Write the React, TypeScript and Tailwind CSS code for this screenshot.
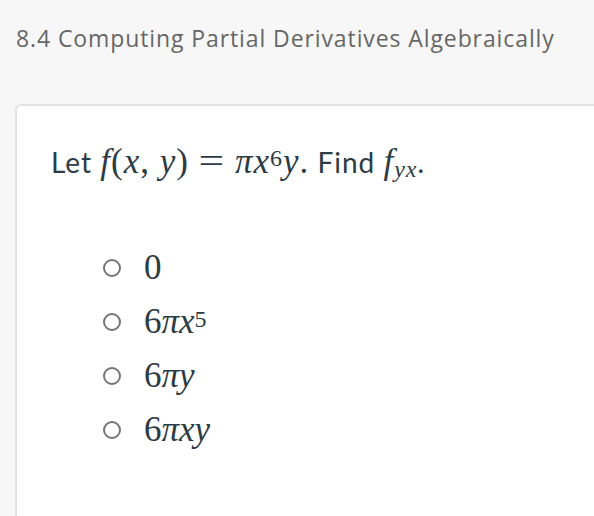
const serif = "font-['Liberation_Serif','Times_New_Roman',serif]"

function Radio() {
  return <div className="h-[18px] w-[18px] shrink-0 rounded-full border-2 border-[#757575] bg-white" />
}

const options = [
  <span className={serif}>0</span>,
  <span className={serif}>
    6<i>πx</i>
    <sup className="relative -top-[6px] text-[24px]">5</sup>
  </span>,
  <span className={serif}>
    6<i>πy</i>
  </span>,
  <span className={serif}>
    6<i>πxy</i>
  </span>,
]

export default function App() {
  return (
    <div className="h-[516px] overflow-hidden bg-[#f7f7f7] font-['Open_Sans',sans-serif]">
      <h1 className="px-4 pt-[22px] text-[23px] leading-[32px] tracking-[0.9px] text-[#666666]">
        8.4 Computing Partial Derivatives Algebraically
      </h1>
      <div className="ml-[15px] mt-[50px] h-[500px] rounded-tl-[6px] border-l-2 border-t-2 border-[#e2e2e2] bg-white">
        <p className="pl-[34px] pt-[38px] text-[28px] leading-[36px] tracking-[1px] text-[#2d3b45] font-['Lato',sans-serif]">
          Let{' '}
          <span className={`${serif} text-[35px] tracking-[1px]`}>
            <i>f</i>(<i>x</i>, <i>y</i>)
            <span className="mx-[10px] inline-block w-[26px] scale-x-[1.3] text-center">=</span>
            <i>πx</i>
            <sup className="relative -top-[7px] text-[24px]">6</sup>
            <i>y</i>.
          </span>{' '}
          Find{' '}
          <span className={`${serif} text-[35px] tracking-[1px]`}>
            <i>f</i>
            <sub className="relative top-[4px] text-[24px]">
              <i>yx</i>
            </sub>
          </span>
          .
        </p>
        <div className="mt-[70px] flex flex-col gap-[18px] pl-[86px]">
          {options.map((o, i) => (
            <div key={i} className="flex h-[36px] items-center gap-[23px] text-[35px] text-[#2d3b45]">
              <Radio />
              {o}
            </div>
          ))}
        </div>
      </div>
    </div>
  )
}
